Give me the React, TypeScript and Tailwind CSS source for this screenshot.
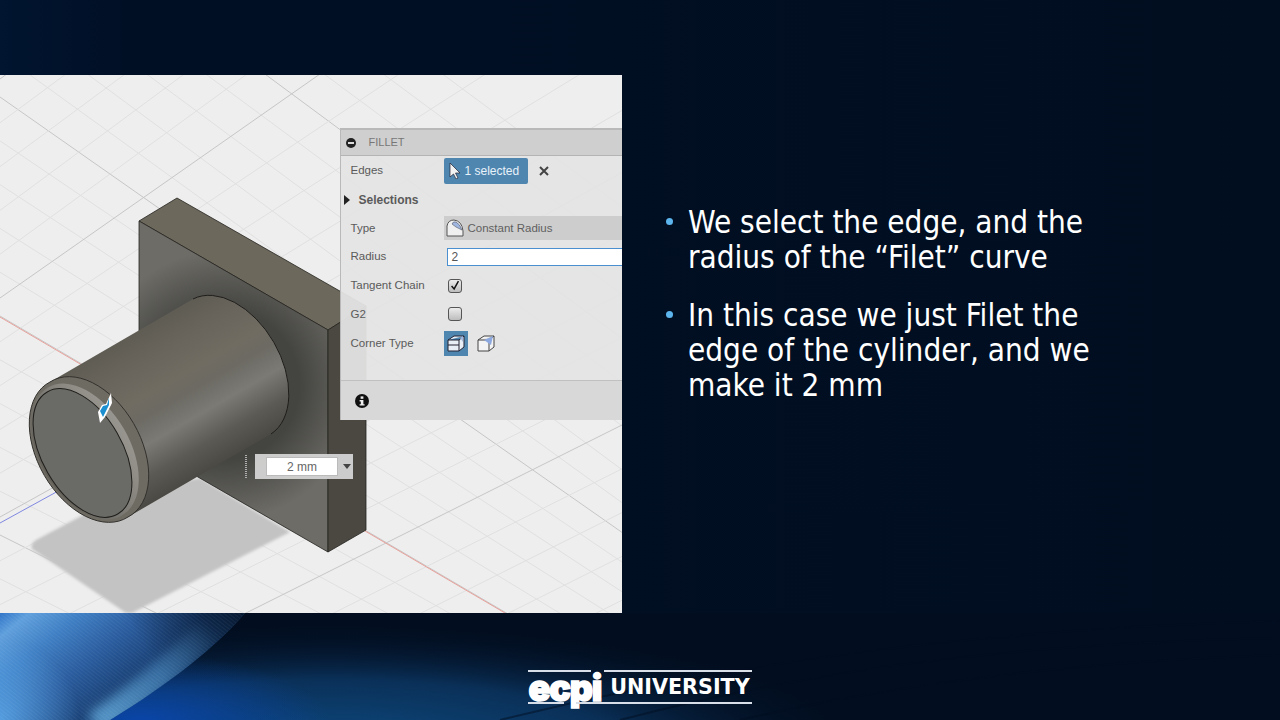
import React from "react";

const aLines = (() => {
  const out: { c: number; m: number; major: boolean }[] = [];
  for (let i = -8; i <= 16; i++) {
    const c = 97 + i * 43.8;
    const m = Math.max(0.5, Math.min(0.74, 0.7 - ((c - 97) * 0.114) / 220));
    out.push({ c, m, major: i % 5 === 0 });
  }
  return out;
})();
const bLines = (() => {
  const out: { c: number; m: number; major: boolean }[] = [];
  for (let i = -6; i <= 22; i++) {
    const c = 298 + i * 43.8;
    const m = Math.max(0.5, Math.min(0.74, 0.7 - ((c - 298) * 0.15) / 225));
    out.push({ c, m, major: i % 5 === 0 });
  }
  return out;
})();

function Scene() {
  return (
    <svg viewBox="0 75 622 538" className="block w-[622px] h-[538px] blur-[0.4px]">
      <defs>
        <linearGradient id="cyl" gradientUnits="userSpaceOnUse" x1="50" y1="382" x2="128" y2="517">
          <stop offset="0" stopColor="#5f5c54" />
          <stop offset="0.12" stopColor="#66625a" />
          <stop offset="0.38" stopColor="#716c62" />
          <stop offset="0.5" stopColor="#6c6a63" />
          <stop offset="0.66" stopColor="#7b7a75" />
          <stop offset="0.84" stopColor="#5c5a54" />
          <stop offset="1" stopColor="#4b4943" />
        </linearGradient>
        <radialGradient id="plate" gradientUnits="userSpaceOnUse" cx="225" cy="385" r="135">
          <stop offset="0.55" stopColor="#444440" />
          <stop offset="1" stopColor="#6d6c67" />
        </radialGradient>
        <linearGradient id="ring" gradientUnits="userSpaceOnUse" x1="32" y1="475" x2="125" y2="410">
          <stop offset="0" stopColor="#5a5750" />
          <stop offset="0.35" stopColor="#72706a" />
          <stop offset="0.75" stopColor="#908e87" />
          <stop offset="1" stopColor="#9c9a94" />
        </linearGradient>
        <filter id="soft" x="-10%" y="-10%" width="120%" height="120%">
          <feGaussianBlur stdDeviation="1.6" />
        </filter>
      </defs>
      <rect x="0" y="75" width="622" height="538" fill="#eeeeee" />
      {aLines.map((l, i) => (
        <line key={"a" + i} x1="0" y1={l.c} x2="622" y2={l.c + l.m * 622} stroke={l.major ? "#c6c6c6" : "#e0e0e0"} strokeWidth="1" />
      ))}
      {bLines.map((l, i) => (
        <line key={"b" + i} x1="0" y1={l.c} x2="622" y2={l.c - l.m * 622} stroke={l.major ? "#c6c6c6" : "#e0e0e0"} strokeWidth="1" />
      ))}
      <line x1="0" y1="317" x2="505" y2="613" stroke="#e8a09a" strokeWidth="1" />
      <line x1="0" y1="523" x2="60" y2="490" stroke="#7f88e0" strokeWidth="1" />
      <path d="M32 549 Q30 543 38 539 L130 490 L200 478 L290 532 L132 613 L126 613 Z" fill="#c3c3c3" filter="url(#soft)" />
      <polygon points="139,221 177,198 366,306 328,330" fill="#6d685c" stroke="#24231f" strokeWidth="0.8" strokeLinejoin="round" />
      <polygon points="139,221 328,330 328,552 139,443" fill="url(#plate)" stroke="#24231f" strokeWidth="0.8" strokeLinejoin="round" />
      <polygon points="328,330 366,306 366,530 328,552" fill="#4a4840" stroke="#24231f" strokeWidth="0.8" strokeLinejoin="round" />
      <path d="M50 382 L193 299 A50 78 -30 0 1 271 434 L128 517 Z" fill="url(#cyl)" />
      <path d="M193 299 A50 78 -30 0 1 271 434" fill="none" stroke="#1f1e1b" strokeWidth="1" />
      <path d="M50 382 A50 78 -30 1 1 128 517 A50 78 -30 1 1 50 382 Z" fill="#6e6b63" stroke="#33312d" strokeWidth="1" />
      <path d="M48 387.4 A45 74 -30 1 1 122 515.6 A45 74 -30 1 1 48 387.4 Z" fill="url(#ring)" />
      <ellipse cx="82.5" cy="453" rx="40" ry="70.5" transform="rotate(-30 82.5 453)" fill="#6a6a67" stroke="#1f1e1b" strokeWidth="1" />
      <path d="M111 393 L112 403 L105 417 L100 423 L98 412 L102 405 L106 404 Z" fill="#ffffff" />
      <path d="M109 398 L109 405 L103 417 L100 411 L103 406 L107 405 Z" fill="#1b8fd0" />
      <line x1="246" y1="455" x2="246" y2="478" stroke="#b0b0b0" strokeWidth="2" strokeDasharray="1 1" />
    </svg>
  );
}

function Row({ label, children }: { label: string; children: React.ReactNode }) {
  return (
    <div className="flex items-center h-[28.7px]">
      <span className="w-[103px] pl-[10px] shrink-0 text-[11.5px] text-[#5a5a5a]">{label}</span>
      {children}
    </div>
  );
}

function Checkbox({ checked }: { checked?: boolean }) {
  return (
    <div className="ml-[4px] w-[14px] h-[14px] rounded-[3px] border border-[#555] bg-gradient-to-b from-[#ececec] to-[#bdbdbd] flex items-center justify-center">
      {checked && (
        <svg viewBox="0 0 14 14" className="w-[13px] h-[13px]">
          <path d="M3 7.5 L6 11 L11 2" fill="none" stroke="#111" strokeWidth="1.7" />
        </svg>
      )}
    </div>
  );
}

function Dialog() {
  return (
    <div className="absolute left-[339.5px] top-[53px] w-[283px] h-[292px] flex flex-col bg-[#e4e4e4]/95 border-t-2 border-l border-[#b9b9b9] font-['Liberation_Sans',Arial,sans-serif]">
      <div className="h-[26px] bg-[#cfcfcf] border-b border-[#b4b4b4] flex items-center pl-[5px] gap-[13px] shrink-0">
        <svg viewBox="0 0 10 10" className="w-[10px] h-[10px]">
          <circle cx="5" cy="5" r="5" fill="#222" />
          <rect x="2" y="4" width="6" height="2" fill="#ddd" />
        </svg>
        <span className="text-[11px] text-[#777]">FILLET</span>
      </div>
      <div className="flex-1 flex flex-col pt-[0.7px]">
        <Row label="Edges">
          <div className="w-[84px] h-[26px] rounded-[2px] bg-[#4f86b0] flex items-center pl-[5px] gap-[4px]">
            <svg viewBox="0 0 12 16" className="w-[12px] h-[16px]">
              <path d="M1 0 L11 10 L6.5 10 L9 15 L7 16 L4.5 11 L1 14 Z" fill="#f2f2f2" stroke="#223" strokeWidth="0.7" />
            </svg>
            <span className="text-[12px] text-[#e8f2fa]">1 selected</span>
          </div>
          <svg viewBox="0 0 10 10" className="ml-[11px] w-[10px] h-[10px]">
            <path d="M1 1 L9 9 M9 1 L1 9" stroke="#444" strokeWidth="2" />
          </svg>
        </Row>
        <div className="flex items-center h-[28.7px] pl-[3px] gap-[9px]">
          <svg viewBox="0 0 6 10" className="w-[6px] h-[10px]">
            <path d="M0 0 L6 5 L0 10 Z" fill="#222" />
          </svg>
          <span className="text-[12px] font-bold text-[#5a5a5a]">Selections</span>
        </div>
        <Row label="Type">
          <div className="flex-1 h-[24px] bg-[#cdcdcd] flex items-center pl-[1px] gap-[3px]">
            <svg viewBox="0 0 20 20" className="w-[20px] h-[20px]">
              <path d="M2 18 L2 8 Q3 2 9 2 Q17 3 18 13 L18 18 Z" fill="#f0f0f0" stroke="#555" strokeWidth="1" />
              <path d="M7 6 Q8 3 11 4 Q15 6 17 12 L11 9 Z" fill="#9fb7e0" stroke="#556" strokeWidth="0.6" />
            </svg>
            <span className="text-[11.5px] text-[#5f5f5f]">Constant Radius</span>
          </div>
        </Row>
        <Row label="Radius">
          <div className="ml-[3px] flex-1 h-[18px] bg-white border border-[#4a90d0] border-r-0 flex items-center pl-[4px] text-[12px] text-[#555]">2</div>
        </Row>
        <Row label="Tangent Chain">
          <Checkbox checked />
        </Row>
        <Row label="G2">
          <Checkbox />
        </Row>
        <Row label="Corner Type">
          <div className="w-[24px] h-[25px] bg-[#4f86b0] flex items-center justify-center">
            <svg viewBox="0 0 20 20" className="w-[20px] h-[20px]">
              <path d="M2 7 L8 3 L18 3 L18 14 L13 18 L2 18 Z M2 7 L13 7 L18 3 M13 7 L13 18 M2 12 L13 12" fill="#e8eef5" stroke="#223" strokeWidth="1" />
              <path d="M14 5 L17 3 L17 9 Z" fill="#9fb7e0" />
            </svg>
          </div>
          <svg viewBox="0 0 20 20" className="ml-[8px] w-[20px] h-[20px]">
            <path d="M2 7 L8 3 L18 3 L18 14 L13 18 L2 18 Z M2 7 L13 7 L18 3 M13 7 L13 18" fill="#f4f4f4" stroke="#444" strokeWidth="1" />
            <path d="M8 7 L17 3 L15 12 Z" fill="#8ea9e0" />
          </svg>
        </Row>
      </div>
      <div className="h-[40px] bg-[#d8d8d8] border-t border-[#c0c0c0] flex items-center pl-[14px] shrink-0">
        <svg viewBox="0 0 14 14" className="w-[14px] h-[14px]">
          <circle cx="7" cy="7" r="7" fill="#111" />
          <rect x="5.6" y="2.4" width="2.8" height="2.4" fill="#eee" />
          <path d="M4.6 6 H8.4 V10.2 H9.6 V11.6 H4.6 V10.2 H5.8 V7.4 H4.6 Z" fill="#eee" />
        </svg>
      </div>
    </div>
  );
}

function DimInput() {
  return (
    <div className="absolute left-[255px] top-[379px] w-[98px] h-[25px] bg-[#d4d4d4]/95 flex items-center pl-[11px] font-['Liberation_Sans',Arial,sans-serif]">
      <div className="w-[72px] h-[19px] bg-white border border-[#bbb] flex items-center justify-center text-[12px] text-[#666]">2 mm</div>
      <svg viewBox="0 0 8 5" className="ml-[5px] w-[8px] h-[5px]">
        <path d="M0 0 H8 L4 5 Z" fill="#444" />
      </svg>
    </div>
  );
}

function Footer() {
  return (
    <footer className="relative h-[107px] overflow-hidden flex items-start justify-center">
      <svg viewBox="0 0 1280 107" className="absolute inset-0 w-full h-full">
        <defs>
          <radialGradient id="glow" gradientUnits="userSpaceOnUse" cx="0" cy="0" r="1" gradientTransform="translate(330 135) scale(530 125)">
            <stop offset="0" stopColor="#0d4a80" />
            <stop offset="0.55" stopColor="#0a3058" />
            <stop offset="1" stopColor="#020f22" stopOpacity="0" />
          </radialGradient>
          <radialGradient id="deep" gradientUnits="userSpaceOnUse" cx="0" cy="0" r="1" gradientTransform="translate(140 110) scale(190 70)">
            <stop offset="0" stopColor="#0a46aa" />
            <stop offset="1" stopColor="#0a46aa" stopOpacity="0" />
          </radialGradient>
          <linearGradient id="band" gradientUnits="userSpaceOnUse" x1="0" y1="0" x2="98.5" y2="120">
            <stop offset="0" stopColor="#2f74c8" />
            <stop offset="0.12" stopColor="#5f9fdc" />
            <stop offset="0.33" stopColor="#3f7fc4" />
            <stop offset="0.6" stopColor="#2a5c9e" />
            <stop offset="0.85" stopColor="#1a4278" />
            <stop offset="1" stopColor="#1d4a80" />
          </linearGradient>
          <linearGradient id="topdark" gradientUnits="userSpaceOnUse" x1="260" y1="0" x2="160" y2="60">
            <stop offset="0" stopColor="#020e20" stopOpacity="0.95" />
            <stop offset="1" stopColor="#020e20" stopOpacity="0" />
          </linearGradient>
          <linearGradient id="edge" gradientUnits="userSpaceOnUse" x1="215" y1="15" x2="110" y2="107">
            <stop offset="0" stopColor="#5596c8" stopOpacity="0" />
            <stop offset="1" stopColor="#5596c8" stopOpacity="0.95" />
          </linearGradient>
          <radialGradient id="corner" gradientUnits="userSpaceOnUse" cx="0" cy="107" r="80">
            <stop offset="0" stopColor="#62b4f6" stopOpacity="0.7" />
            <stop offset="1" stopColor="#62b4f6" stopOpacity="0" />
          </radialGradient>
          <pattern id="streak" patternUnits="userSpaceOnUse" width="3" height="3" patternTransform="rotate(38)">
            <rect width="3" height="1" fill="#ffffff" fillOpacity="0.05" />
          </pattern>
          <filter id="edgeBlur" x="-40%" y="-40%" width="180%" height="180%">
            <feGaussianBlur stdDeviation="6" />
          </filter>
          <clipPath id="bandClip">
            <path d="M0 0 L245 0 C215 35 170 70 110 107 L0 107 Z" />
          </clipPath>
        </defs>
        <rect width="1280" height="107" fill="#020e20" />
        <rect width="1280" height="107" fill="url(#glow)" />
        <rect width="500" height="107" fill="url(#deep)" />
        <path d="M620 107 C800 60 1000 30 1280 25 M500 107 C750 45 1000 15 1280 8 M740 107 C900 70 1080 48 1280 42" fill="none" stroke="#020e20" strokeOpacity="0.5" strokeWidth="2" />
        <g clipPath="url(#bandClip)">
          <rect width="260" height="107" fill="url(#band)" />
          <rect width="260" height="107" fill="url(#corner)" />
          <rect width="260" height="107" fill="url(#topdark)" />
          <path d="M205 20 C175 52 140 82 95 112" fill="none" stroke="url(#edge)" strokeWidth="26" filter="url(#edgeBlur)" />
          <rect width="260" height="107" fill="url(#streak)" />
        </g>
      </svg>
      <div className="relative mt-[56.5px] w-[224px] h-[40px] ml-[-1px]">
        <div className="absolute left-0 top-0 w-[63px] h-[2px] bg-[#d8dfe8]" />
        <div className="absolute left-[76px] top-0 w-[148px] h-[2px] bg-[#d8dfe8]" />
        <div className="absolute left-0 top-[32px] w-[36px] h-[2px] bg-[#d8dfe8]" />
        <div className="absolute left-[48px] top-[32px] w-[176px] h-[2px] bg-[#d8dfe8]" />
        <div className="flex items-center h-[36px] pl-[1px]">
          <span className="text-white font-['Inter',sans-serif] font-black text-[36px] leading-none tracking-[-1.2px] [-webkit-text-stroke:1.5px_white]">ecpi</span>
          <span className="ml-[9px] text-white font-['DejaVu_Sans',sans-serif] font-bold text-[20.7px] leading-none">UNIVERSITY</span>
        </div>
      </div>
    </footer>
  );
}

export default function App() {
  return (
    <div className="w-[1280px] h-[720px] flex flex-col overflow-hidden bg-gradient-to-r from-[#011530] via-[#010f25] via-[10%] to-[#010e20]">
      <div className="h-[75px] shrink-0" />
      <main className="flex h-[538px] shrink-0">
        <div className="relative w-[622px] h-[538px] shrink-0 overflow-hidden">
          <Scene />
          <Dialog />
          <DimInput />
        </div>
        <ul className="pl-[44px] pt-[130px] w-[520px] text-white font-['DejaVu_Sans_Condensed','DejaVu_Sans',sans-serif] text-[31.2px] leading-[35px] flex flex-col gap-[23px]">
          <li className="relative pl-[22px]">
            <span className="absolute left-0 top-[13px] w-[7px] h-[7px] rounded-full bg-[#5db5ee]" />
            We select the edge, and the radius of the “Filet” curve
          </li>
          <li className="relative pl-[22px]">
            <span className="absolute left-0 top-[13px] w-[7px] h-[7px] rounded-full bg-[#5db5ee]" />
            In this case we just Filet the edge of the cylinder, and we make it 2 mm
          </li>
        </ul>
      </main>
      <Footer />
    </div>
  );
}
